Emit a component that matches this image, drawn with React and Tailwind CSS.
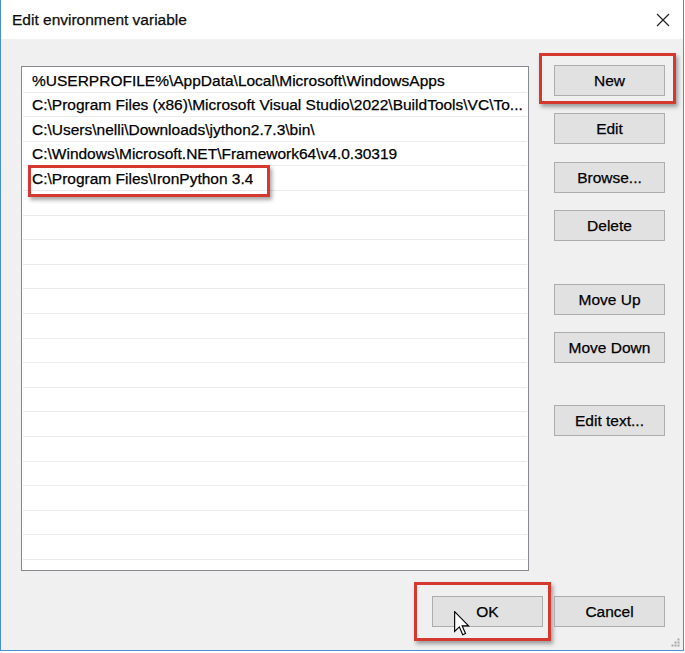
import React from 'react';

const paths = [
  '%USERPROFILE%\\AppData\\Local\\Microsoft\\WindowsApps',
  'C:\\Program Files (x86)\\Microsoft Visual Studio\\2022\\BuildTools\\VC\\To...',
  'C:\\Users\\nelli\\Downloads\\jython2.7.3\\bin\\',
  'C:\\Windows\\Microsoft.NET\\Framework64\\v4.0.30319',
  'C:\\Program Files\\IronPython 3.4',
];

const rows = Array.from({ length: 21 }, (_, i) => paths[i] || '');

function Button({ children, className = '' }) {
  return (
    <div className={'relative h-[31px] w-[111px] ' + className}>
      <div className="flex h-full w-full items-center justify-center border border-[#adadad] bg-[#e1e1e1] text-[15.5px] text-black">
        {children}
      </div>
    </div>
  );
}

function RedBox({ className }) {
  return (
    <div className={'pointer-events-none absolute border-[3px] border-[#d4382f] shadow-[2px_3px_4px_rgba(0,0,0,0.35)] ' + className} />
  );
}

function Cursor() {
  return (
    <svg className="absolute left-[22px] top-[15px]" width="16" height="25" viewBox="0 0 12.5 19.5">
      <path
        d="M0.5 0.5 L0.5 16 L4.2 12.4 L6.8 18.6 L9 17.6 L6.4 11.6 L11.4 11.6 Z"
        fill="#ffffff"
        stroke="#000000"
        strokeWidth="0.9"
        strokeLinejoin="miter"
      />
    </svg>
  );
}

export default function App() {
  return (
    <div
      className="h-[653px] w-[685px] bg-white [-webkit-text-stroke:0.25px_#000]"
      style={{ fontFamily: '"Liberation Sans", Arial, sans-serif' }}
    >
      <div className="relative flex h-[651px] w-[684px] flex-col border-x border-b border-[#4a8fd6] bg-[#f0f0f0]">
        {/* title bar */}
        <div className="flex h-[39px] items-center justify-between bg-white pl-[11px] pr-[13px]">
          <span className="text-[15.5px] text-[#111]">Edit environment variable</span>
          <svg width="14" height="14" viewBox="0 0 14 14">
            <path d="M1 1 L13 13 M13 1 L1 13" stroke="#222" strokeWidth="1.2" />
          </svg>
        </div>

        {/* body */}
        <div className="flex pl-[20px] pt-[27px]">
          <div className="h-[505px] w-[508px] overflow-hidden border border-[#868a8f] bg-white pt-px">
            {rows.map((p, i) => (
              <div key={i} className="relative mx-px flex h-[24.6px] items-center border-b border-[#ebebeb] pl-[9px] pt-px text-[15.5px] text-black">
                <span className="overflow-hidden whitespace-nowrap">{p}</span>
                {i === 4 && <RedBox className="left-[5px] top-[-1px] h-[32px] w-[242px]" />}
              </div>
            ))}
          </div>

          <div className="-mt-px ml-[25px] flex flex-col">
            <Button>
              New
              <RedBox className="-left-[15px] -top-[12px] -right-[11px] -bottom-[8px]" />
            </Button>
            <Button className="mt-[17px]">Edit</Button>
            <Button className="mt-[18px]">Browse...</Button>
            <Button className="mt-[17px]">Delete</Button>
            <Button className="mt-[43px]">Move Up</Button>
            <Button className="mt-[17px]">Move Down</Button>
            <Button className="mt-[42px]">Edit text...</Button>
          </div>
        </div>

        {/* footer buttons */}
        <div className="mt-[25px] flex justify-end gap-[11px] pr-[18px]">
          <Button>
            OK
            <RedBox className="-left-[18px] -top-[14px] -right-[8px] -bottom-[14px]" />
            <Cursor />
          </Button>
          <Button>Cancel</Button>
        </div>

        {/* resize grip */}
        <svg className="absolute bottom-[3px] right-[3px]" width="9" height="9" viewBox="0 0 9 9">
          <rect x="6.5" y="0.5" width="2" height="2" fill="#a8a8a8" />
          <rect x="3.5" y="3.5" width="2" height="2" fill="#a8a8a8" />
          <rect x="6.5" y="3.5" width="2" height="2" fill="#a8a8a8" />
          <rect x="0.5" y="6.5" width="2" height="2" fill="#a8a8a8" />
          <rect x="3.5" y="6.5" width="2" height="2" fill="#a8a8a8" />
          <rect x="6.5" y="6.5" width="2" height="2" fill="#a8a8a8" />
        </svg>
      </div>
    </div>
  );
}
